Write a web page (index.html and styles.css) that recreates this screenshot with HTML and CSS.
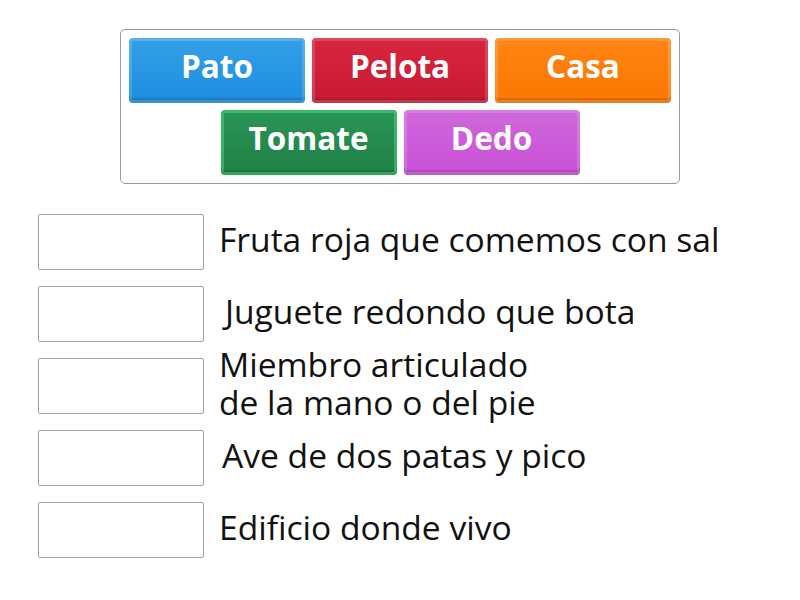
FILE: index.html
```html
<!DOCTYPE html>
<html lang="es">
<head>
<meta charset="utf-8">
<title>Relaciona</title>
<link rel="stylesheet" href="styles.css">
</head>
<body>
<div class="page">
  <div class="bank">
    <div class="tile tile-blue">Pato</div>
    <div class="tile tile-red">Pelota</div>
    <div class="tile tile-orange">Casa</div>
    <div class="tile tile-green">Tomate</div>
    <div class="tile tile-purple">Dedo</div>
  </div>
  <ul class="matches">
    <li class="match"><span class="slot"></span><span class="clue">Fruta roja que comemos con sal</span></li>
    <li class="match"><span class="slot"></span><span class="clue clue-j">Juguete redondo que bota</span></li>
    <li class="match"><span class="slot"></span><span class="clue">Miembro articulado<br>de la mano o del pie</span></li>
    <li class="match"><span class="slot"></span><span class="clue clue-a">Ave de dos patas y pico</span></li>
    <li class="match"><span class="slot"></span><span class="clue">Edificio donde vivo</span></li>
  </ul>
</div>
</body>
</html>
```

FILE: styles.css
```css
html, body {
  margin: 0;
  padding: 0;
  background: #ffffff;
}

body {
  font-family: "Open Sans", "Liberation Sans", sans-serif;
  color: #111111;
}

.page {
  width: 800px;
  height: 600px;
  padding-top: 29px;
  box-sizing: border-box;
}

.bank {
  width: 560px;
  margin: 0 auto;
  box-sizing: border-box;
  border: 1px solid #9a9a9a;
  border-radius: 5px;
  padding: 8px;
  display: flex;
  flex-wrap: wrap;
  justify-content: center;
  gap: 7px 7px;
}

.tile {
  width: 176px;
  height: 65px;
  box-sizing: border-box;
  border-radius: 4px;
  display: flex;
  align-items: center;
  justify-content: center;
  padding-bottom: 10px;
  color: #ffffff;
  font-weight: 700;
  font-size: 31.5px;
  box-shadow:
    inset 0 0 0 3px rgba(255, 255, 255, 0.16),
    inset 0 -5px 0 rgba(0, 0, 0, 0.12);
}

.tile-blue {
  background: linear-gradient(#35a0e8, #1c8ddf);
}

.tile-red {
  background: linear-gradient(#d9253f, #c81a32);
}

.tile-orange {
  background: linear-gradient(#ff8515, #fb7700);
}

.tile-green {
  background: linear-gradient(#2a9556, #1f8046);
  box-shadow:
    inset 0 0 0 3px rgba(80, 230, 130, 0.45),
    inset 0 -5px 0 rgba(0, 0, 0, 0.12);
}

.tile-purple {
  background: linear-gradient(#d068dc, #c84fd6);
}

.matches {
  list-style: none;
  margin: 30px 0 0 38px;
  padding: 0;
  display: flex;
  flex-direction: column;
  gap: 16px;
}

.match {
  display: flex;
  align-items: center;
  gap: 15px;
  height: 56px;
}

.slot {
  flex: none;
  width: 166px;
  height: 56px;
  box-sizing: border-box;
  border: 1px solid #a0a0a0;
  border-radius: 2px;
  background: #ffffff;
}

.clue {
  font-size: 33.6px;
  line-height: 38px;
  padding-bottom: 6px;
  color: #111111;
  white-space: nowrap;
}

.clue-j {
  padding-left: 6px;
}

.clue-a {
  padding-left: 3px;
}
```
